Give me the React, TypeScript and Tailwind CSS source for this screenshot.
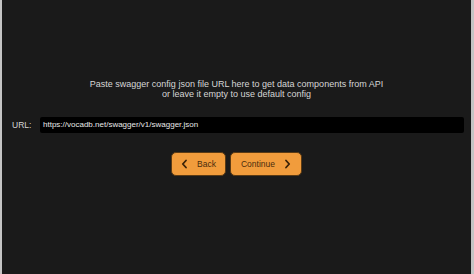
import React from 'react';

const Chevron = ({ dir }: { dir: 'left' | 'right' }) => (
  <svg width="7" height="10" viewBox="0 0 7 10" fill="none" stroke="#3a2208" strokeWidth="1.8" strokeLinecap="round" strokeLinejoin="round">
    {dir === 'left' ? <path d="M5 1.5 L1.8 5 L5 8.5" /> : <path d="M2 1.5 L5.2 5 L2 8.5" />}
  </svg>
);

export default function App() {
  return (
    <div
      className="h-[274px] w-[474px] overflow-hidden border-l-2 border-r-[3px] border-[#c4c4c4] bg-[#1a1a1a] text-[#d6d6d6]"
      style={{ fontFamily: '"Liberation Sans", Arial, sans-serif' }}
    >
      <div className="flex flex-col items-center pt-[79px]">
        <p className="text-center text-[9px] leading-[10px]">
          Paste swagger config json file URL here to get data components from API
          <br />
          or leave it empty to use default config
        </p>

        <div className="mt-[18px] flex w-full items-center pl-[10px] pr-[7px]">
          <span className="w-[28px] text-[8.5px]">URL:</span>
          <div className="flex h-[16px] flex-1 items-center rounded-[2px] bg-black px-[3px] text-[8px] text-[#e8e8e8]">
            https://vocadb.net/swagger/v1/swagger.json
          </div>
        </div>

        <div className="mt-[19px] flex gap-[4px]">
          <button className="flex h-[24px] w-[55px] items-center justify-center gap-[9px] rounded-[5px] border border-[#5a3a14] bg-[#f19c3c] text-[8.5px] font-medium text-[#4a2c0c]">
            <Chevron dir="left" />
            Back
          </button>
          <button className="flex h-[24px] w-[72px] items-center justify-center gap-[9px] rounded-[5px] border border-[#5a3a14] bg-[#f19c3c] text-[8.5px] font-medium text-[#4a2c0c]">
            Continue
            <Chevron dir="right" />
          </button>
        </div>
      </div>
    </div>
  );
}
